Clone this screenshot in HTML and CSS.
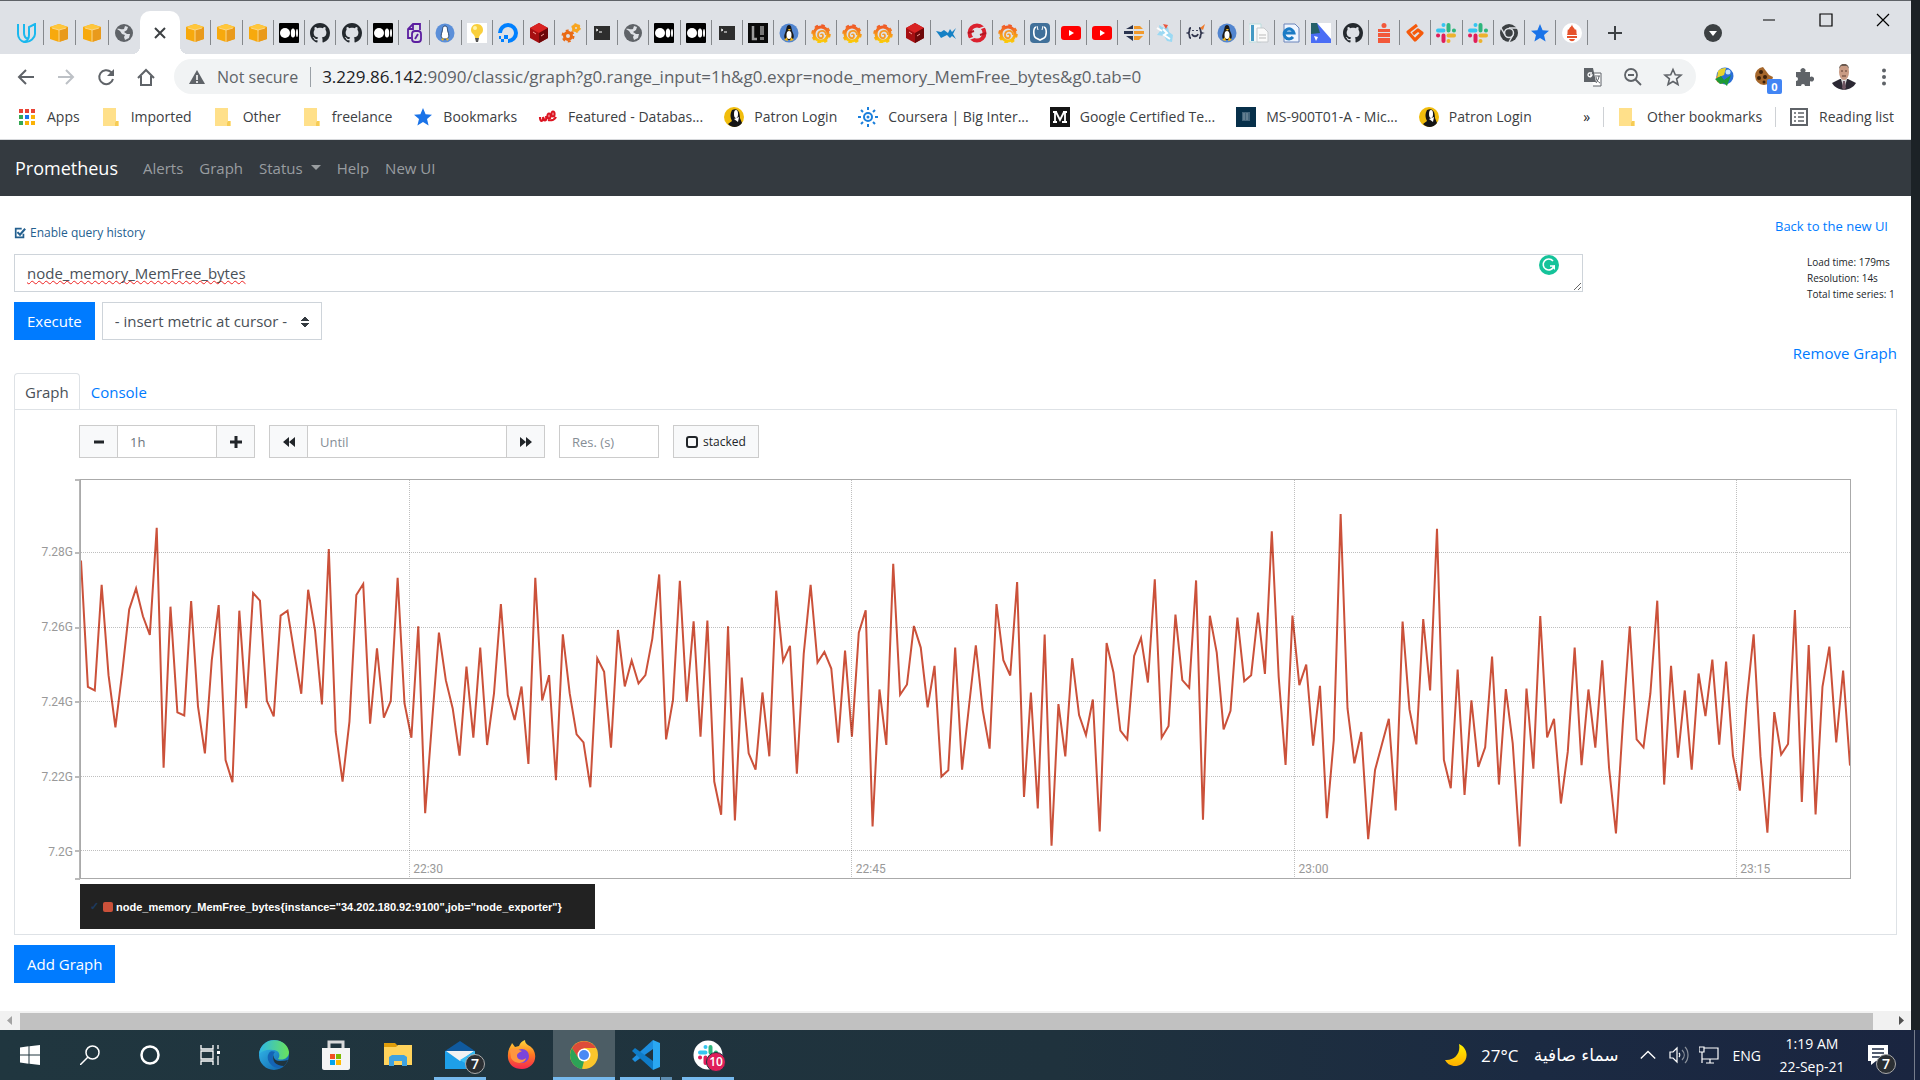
FILE: index.html
```html
<!DOCTYPE html>
<html lang="en">
<head>
    <meta charset="UTF-8">
    <meta name="viewport" content="width=device-width, initial-scale=1.0">
    <title>Prometheus Time Series Collection and Processing Server</title>
    <link rel="stylesheet" href="styles.css">
</head>
<body>
<svg class="symbols" aria-hidden="true">
    <defs>
        <linearGradient id="gold" x2="0" y2="1"><stop offset="0" stop-color="#f05a28"/><stop offset="1" stop-color="#fbca0a"/></linearGradient>
        <linearGradient id="edgeBlue" x2="1" y2="1"><stop offset="0" stop-color="#36c1f1"/><stop offset="1" stop-color="#0c59a4"/></linearGradient>
        <linearGradient id="edgeGreen" x2="1"><stop offset="0" stop-color="#2cb6e8"/><stop offset="1" stop-color="#6ae25a"/></linearGradient>
        <linearGradient id="fox" x2="0" y2="1"><stop offset="0" stop-color="#ffd93b"/><stop offset=".5" stop-color="#ff7a22"/><stop offset="1" stop-color="#f5264f"/></linearGradient>
        <linearGradient id="moonFill" x2="0" y2="1"><stop offset="0" stop-color="#fff200"/><stop offset="1" stop-color="#ffae00"/></linearGradient>
    </defs>
    <symbol id="udacity" viewBox="0 0 20 20"><path d="M1 1v10c0 4 3 7 6 8 3-1 5-3 5-7V4l6-3v10c0 4-5 8-9 8M7 1v9c0 3 1 5 4 6" fill="none" stroke="#1ab8ee" stroke-width="2"/></symbol>
    <symbol id="cube" viewBox="0 0 20 20"><path d="M1 4l9-3 9 3v12l-9 3-9-3z" fill="#f7a90d"/><path d="M10 7l9-3v12l-9 3z" fill="#e99a1c"/><path d="M1 4l9-3 9 3-9 3z" fill="#ffc73c"/><path d="M10 7v12M3 5l7 2 7-2" stroke="#fbd78a" fill="none"/></symbol>
    <symbol id="globe" viewBox="0 0 20 20"><circle cx="10" cy="10" r="9" fill="#5f6368"/><path d="M3 6c2-1 4 1 7 0l1-3 3 1-1 3-3 2 3 2 3 0-1 4-4 2-1-3 1-2-3-1-2-3z" fill="#dee1e6"/></symbol>
    <symbol id="medium" viewBox="0 0 20 20"><rect width="20" height="20" rx="1"/><circle cx="6" cy="10" r="5" fill="#fff"/><ellipse cx="14" cy="10" rx="2.200" ry="4.600" fill="#fff"/><ellipse cx="18" cy="10" rx="1" ry="4" fill="#fff"/></symbol>
    <symbol id="github" viewBox="0 0 16 16"><path fill="#24292e" d="M8 0C3.580 0 0 3.580 0 8c0 3.540 2.290 6.530 5.470 7.590.4.070.55-.17.55-.38 0-.19-.01-.82-.01-1.490-2.010.37-2.530-.49-2.690-.94-.09-.23-.48-.94-.82-1.130-.28-.15-.68-.52-.01-.53.63-.01 1.080.58 1.230.82.72 1.210 1.870.87 2.330.66.07-.52.28-.87.51-1.070-1.780-.2-3.640-.89-3.640-3.950 0-.87.31-1.590.82-2.150-.08-.2-.36-1.020.08-2.120 0 0 .67-.21 2.200.82.64-.18 1.320-.27 2-.27s1.360.09 2 .27c1.530-1.040 2.200-.82 2.200-.82.44 1.100.16 1.920.08 2.120.51.56.82 1.270.82 2.150 0 3.070-1.870 3.750-3.650 3.950.29.25.54.73.54 1.480 0 1.070-.01 1.930-.01 2.200 0 .21.15.46.55.38A8 8 0 0016 8c0-4.420-3.580-8-8-8z"/></symbol>
    <symbol id="docs" viewBox="0 0 20 20"><g fill="none" stroke="#5c1fa0" stroke-width="1.800"><path d="M7 15H4V6l5-5h7v6M4 6h5V1"/><rect x="8" y="8" width="9" height="11" rx="3"/><path d="M11 16l3-5"/></g></symbol>
    <symbol id="penguin" viewBox="0 0 20 20"><circle cx="10" cy="10" r="9.500" fill="#5285cf"/><path d="M10 2c3 0 2 4 4 8 2 5 0 7-4 7s-6-2-4-7c2-4 1-8 4-8z" fill="#191919"/><ellipse cx="10" cy="12" rx="2.500" ry="4" fill="#fff"/><path d="M5 17l3-3 1 4zM15 17l-3-3-1 4zM9 6h3l-2 2z" fill="#f5b81c"/></symbol>
    <symbol id="penguinPale" viewBox="0 0 20 20"><circle cx="10" cy="10" r="9.500" fill="#5b8fd9"/><path d="M10 3c3 0 2 3 3 6 2 5 0 7-3 7s-5-2-3-7c1-3 0-6 3-6z" fill="#fff" stroke="#27456e"/><path d="M6 16l3-1-1 3zM14 16l-3-1 1 3z" fill="#f5b81c"/></symbol>
    <symbol id="bulb" viewBox="0 0 20 20"><path d="M0 0h20v20H0z" fill="#fff"/><path d="M10 1c4 0 6 3 6 6 0 4-4 4-4 8H8c0-4-4-4-4-8 0-3 2-6 6-6z" fill="#f9cf3c"/><path d="M8 15h4l-1 4H9z" fill="#555"/><circle cx="8" cy="5" r="2" fill="#fff3a5"/></symbol>
    <symbol id="ocean" viewBox="0 0 20 20"><path d="M10 20v-4a6 6 0 1 0-6-6H0a10 10 0 1 1 10 10z" fill="#0080ff"/><path d="M6 16h4v-4H6zM3 16h3v3H3zM1 13h2v3H1z" fill="#0080ff"/></symbol>
    <symbol id="redcube" viewBox="0 0 20 20"><path d="M10 0l9 5v10l-9 5-9-5V5z" fill="#a60f12"/><path d="M10 0l9 5-9 5-9-5z" fill="#d92323"/><path d="M10 10l9-5v10l-9 5z" fill="#6d080a"/><path d="M4 9l3 2M12 13l3-2" stroke="#f6a19a"/></symbol>
    <symbol id="gears" viewBox="0 0 20 20"><g fill="none" stroke-width="3"><circle cx="7" cy="13" r="3.500" stroke="#ea6a14"/><circle cx="15" cy="5" r="2.500" stroke="#f8a51f"/><circle cx="7" cy="13" r="5.500" stroke="#ea6a14" stroke-width="2" stroke-dasharray="2.900 2.860"/><circle cx="15" cy="5" r="4" stroke="#f8a51f" stroke-width="1.500" stroke-dasharray="2 2.200"/></g></symbol>
    <symbol id="term" viewBox="0 0 20 20"><path d="M2 3h16v14H2z" fill="#2e2e2e"/><path d="M4 6l2 1-2 1M7 9h3" stroke="#fff" fill="none"/></symbol>
    <symbol id="linuxin" viewBox="0 0 20 20"><path d="M0 0h20v20H0z" fill="#0a0a0a"/><path d="M5 3v13h4" stroke="#9b9b9b" stroke-width="2.500" fill="none"/><path d="M12 3h4v9h-4zM12 14h4v3h-4z" fill="#777"/></symbol>
    <symbol id="grafana" viewBox="0 0 20 20"><circle cx="10" cy="11" r="7" fill="none" stroke="url(#gold)" stroke-width="3"/><circle cx="10" cy="11" r="8.500" fill="none" stroke="url(#gold)" stroke-width="2.500" stroke-dasharray="3.400 3.280"/><path d="M15 12c0-6-8-5-8 0 0 4 5 4 5 1 0-2-2-2-2-1" fill="none" stroke="#f59a27" stroke-width="1.800"/></symbol>
    <symbol id="hound" viewBox="0 0 20 20"><path d="M0 8l5 1 3-2 4 3 2-4 2 3 4-4-3 6 3 5-4-3-2 2-3-3-6 3-2-3z" fill="#1581c5"/></symbol>
    <symbol id="shift" viewBox="0 0 20 20"><circle cx="10" cy="10" r="7.500" fill="none" stroke="#db212f" stroke-width="4"/><path d="M12 6l8-3M0 17l8-3" stroke="#dee1e6" stroke-width="1.500"/><path d="M1 10l6-2M13 12l6-2" stroke="#b31723" stroke-width="2"/></symbol>
    <symbol id="owl" viewBox="0 0 20 20"><rect width="20" height="20" rx="4" fill="#40709a"/><path d="M6 4c-3 1-3 9 0 11l4 2 4-2c3-2 3-10 0-11" fill="none" stroke="#fff" stroke-width="1.600"/><path d="M7 3l1 4M13 3l-1 4" stroke="#fff"/></symbol>
    <symbol id="youtube" viewBox="0 0 20 20"><rect y="3" width="20" height="14" rx="3" fill="#f00"/><path d="M8 7l5 3-5 3z" fill="#fff"/></symbol>
    <symbol id="stripes" viewBox="0 0 20 20"><path d="M9 2L2 6h7zM9 8H0v3h9zM9 13H2l7 5z" fill="#2a3450"/><path d="M10 3h6l3 3h-9zM10 8h10v3H10zM10 13h9l-4 4h-5z" fill="#f19a2c"/></symbol>
    <symbol id="genie" viewBox="0 0 20 20"><path d="M4 2l5 3 4-1 1 5 4 3-1 7-5-1-3-5-7-1 3-4z" fill="#9bd9f3"/><path d="M2 5l5 3M8 6l4 4-3 2 6 4" fill="none" stroke="#fff" stroke-width="2"/><path d="M8 1l5 1-2 4z" fill="#e9573f"/></symbol>
    <symbol id="face" viewBox="0 0 20 20"><path d="M5 5c-3 0 0 4-3 5 3 1 0 5 3 5M13 5c3 0 0 4 3 5-3 1 0 5-3 5M6 11c1 3 5 3 6 0M7 7v1M11 7v1" fill="none" stroke="#333850" stroke-width="1.800"/><path d="M14 5l5-4-2 6z" fill="#f07a2b"/></symbol>
    <symbol id="sheet" viewBox="0 0 20 20"><path d="M0 1h12v18H0z" fill="#f7f8f9" stroke="#bdd"/><path d="M2 2h3v16H2z" fill="#4499c4"/><path d="M8 5h7l4 4v10H8z" fill="#fafafa" stroke="#c5c9cc"/><path d="M10 12h7M10 15h7" stroke="#bbb"/></symbol>
    <symbol id="iedoc" viewBox="0 0 20 20"><path d="M4 1h11l4 4v14H4z" fill="#eef5ff" stroke="#6a84ba"/><path d="M13 14a5 5 0 1 1 1-4H5" fill="none" stroke="#1b7bc5" stroke-width="3"/></symbol>
    <symbol id="azure" viewBox="0 0 20 20"><path d="M0 0h20v20H0z" fill="#fff"/><path d="M0 0h6l14 16v4H0z" fill="#4a6df5"/><path d="M0 0h6l3 10-9 1z" fill="#25616a"/><path d="M3 13l2 5 2-4z" fill="#fff"/></symbol>
    <symbol id="tower" viewBox="0 0 20 20"><g fill="#f2583a"><circle cx="10" cy="2.500" r="2.500"/><path d="M4 6h12v3H4zM4 10h12v4H4zM4 15h12v5H4z"/></g></symbol>
    <symbol id="gitpod" viewBox="0 0 20 20"><path d="M12 2L3 9l7 8 7-7-4-3-5 4" fill="none" stroke="#f55a0c" stroke-width="3.200" stroke-linejoin="round"/></symbol>
    <symbol id="slack" viewBox="0 0 20 20"><g stroke-width="4" stroke-linecap="round"><path d="M7.500 2v.1M2 7.500h5.500" stroke="#36c5f0"/><path d="M12.500 2v5.500M18 7.500h-.1" stroke="#2eb67d"/><path d="M12.500 12.500H18M12.500 18v-.1" stroke="#ecb22e"/><path d="M7.500 12.500V18M2 12.500h.1" stroke="#e01e5a"/></g></symbol>
    <symbol id="chromeDark" viewBox="0 0 20 20"><circle cx="10" cy="10" r="9" fill="#3c4043"/><circle cx="10" cy="10" r="4.500" fill="none" stroke="#dee1e6" stroke-width="1.500"/><path d="M10 5h8M6 12L2 5M14 12l-4 7" stroke="#dee1e6" stroke-width="1.500"/></symbol>
    <symbol id="star" viewBox="0 0 20 20"><path d="M10 1l2.600 6.300 6.400.5-5 4.200 1.600 6.500L10 15l-5.600 3.500L6 12 1 7.800l6.400-.5z" fill="#1a73e8"/></symbol>
    <symbol id="flame" viewBox="0 0 20 20"><circle cx="10" cy="10" r="10" fill="#fff"/><path d="M10 1c0 3 3 4 3 6l1-1c1 3 0 4 1 6H5c1-2 0-3 1-6l1 1c0-3 3-3 3-6zM5 13h10v2H5zM7 16h6c-1 3-5 3-6 0z" fill="#e6522c"/></symbol>
    <symbol id="folder" viewBox="0 0 20 20"><path d="M2 1h13v13h3v5H2z" fill="#ffe08a"/><path d="M15 14h2v5h-3v-3z" fill="#f6cc55"/></symbol>
    <symbol id="apps" viewBox="0 0 20 20"><path d="M2 2h4v4H2zM8 2h4v4H8zM14 2h4v4h-4z" fill="#ea4335"/><path d="M2 8h4v4H2zM2 14h4v4H2z" fill="#34a853"/><path d="M8 8h4v4H8z" fill="#1a73e8"/><path d="M14 8h4v4h-4zM8 14h4v4H8zM14 14h4v4h-4z" fill="#fbb206"/></symbol>
    <symbol id="redmark" viewBox="0 0 20 20"><g fill="none" stroke="#dc1421" stroke-width="2.200"><path d="M2 10c0 6 4 4 3 0 2 6 4 3 3-1"/><ellipse cx="11" cy="9" rx="1.500" ry="2.500"/><ellipse cx="15" cy="7" rx="1.500" ry="2.500"/><path d="M10 13c4 1 7-1 8-3"/></g></symbol>
    <symbol id="patron" viewBox="0 0 20 20"><circle cx="10" cy="10" r="10" fill="#f1bd0c"/><path d="M8 3c7-3 8 4 8 8l2 5c-4 6-12 4-14 1l4-3c-2-4-2-7 0-11z" fill="#151515"/><ellipse cx="12" cy="7" rx="2" ry="4" fill="#fff"/><path d="M10 12l5-2-1 5z" fill="#fff"/></symbol>
    <symbol id="coursera" viewBox="0 0 20 20"><g fill="none" stroke="#1a7fdc" stroke-width="2"><circle cx="10" cy="10" r="4"/><path d="M10 0v3M10 17v3M0 10h3M17 10h3M3 3l2 2M15 15l2 2M17 3l-2 2M3 17l2-2"/></g><circle cx="10" cy="10" r="1.500" fill="#1a7fdc"/></symbol>
    <symbol id="mblack" viewBox="0 0 20 20"><path d="M0 0h20v20H0z" fill="#151515"/><path d="M3 5h4M13 5h4M3 15h4M12 15h5M5 5v10M6 5l4 8 4-8M15 5v10" fill="none" stroke="#fff" stroke-width="1.800"/></symbol>
    <symbol id="msnavy" viewBox="0 0 20 20"><path d="M0 0h20v20H0z" fill="#07304a"/><path d="M6 5h8v9H6z" fill="#44657b"/><path d="M8 6v7M11 6v7" stroke="#8199a7"/></symbol>
    <symbol id="list" viewBox="0 0 20 20"><path d="M2 2h16v16H2z" fill="none" stroke="#5f6368" stroke-width="2"/><path d="M5 6h2M9 6h6M5 10h2M9 10h6M5 14h2M9 14h6" stroke="#5f6368" stroke-width="1.600"/></symbol>
</svg>

<div class="browser">
    <div class="tabstrip">
        <div class="tabs tabs-left">
            <button class="tab" aria-label="Udacity"><svg><use href="#udacity"/></svg></button>
            <button class="tab" aria-label="AWS"><svg><use href="#cube"/></svg></button>
            <button class="tab" aria-label="AWS"><svg><use href="#cube"/></svg></button>
            <button class="tab" aria-label="Page"><svg><use href="#globe"/></svg></button>
        </div>
        <button class="tab-active" aria-label="Close tab"><svg viewBox="0 0 12 12"><path d="M1 1l10 10M11 1L1 11" stroke="#3c4043" stroke-width="2"/></svg></button>
        <div class="tabs tabs-right">
            <button class="tab" aria-label="AWS"><svg><use href="#cube"/></svg></button>
            <button class="tab" aria-label="AWS"><svg><use href="#cube"/></svg></button>
            <button class="tab" aria-label="AWS"><svg><use href="#cube"/></svg></button>
            <button class="tab" aria-label="Medium"><svg><use href="#medium"/></svg></button>
            <button class="tab" aria-label="GitHub"><svg><use href="#github"/></svg></button>
            <button class="tab" aria-label="GitHub"><svg><use href="#github"/></svg></button>
            <button class="tab" aria-label="Medium"><svg><use href="#medium"/></svg></button>
            <button class="tab" aria-label="Docs"><svg><use href="#docs"/></svg></button>
            <button class="tab" aria-label="Linux"><svg><use href="#penguinPale"/></svg></button>
            <button class="tab" aria-label="Tips"><svg><use href="#bulb"/></svg></button>
            <button class="tab" aria-label="DigitalOcean"><svg><use href="#ocean"/></svg></button>
            <button class="tab" aria-label="Redis"><svg><use href="#redcube"/></svg></button>
            <button class="tab" aria-label="Settings"><svg><use href="#gears"/></svg></button>
            <button class="tab" aria-label="Terminal"><svg><use href="#term"/></svg></button>
            <button class="tab" aria-label="Page"><svg><use href="#globe"/></svg></button>
            <button class="tab" aria-label="Medium"><svg><use href="#medium"/></svg></button>
            <button class="tab" aria-label="Medium"><svg><use href="#medium"/></svg></button>
            <button class="tab" aria-label="Terminal"><svg><use href="#term"/></svg></button>
            <button class="tab" aria-label="Linux blog"><svg><use href="#linuxin"/></svg></button>
            <button class="tab" aria-label="Linux"><svg><use href="#penguin"/></svg></button>
            <button class="tab" aria-label="Grafana"><svg><use href="#grafana"/></svg></button>
            <button class="tab" aria-label="Grafana"><svg><use href="#grafana"/></svg></button>
            <button class="tab" aria-label="Grafana"><svg><use href="#grafana"/></svg></button>
            <button class="tab" aria-label="Redis"><svg><use href="#redcube"/></svg></button>
            <button class="tab" aria-label="Page"><svg><use href="#hound"/></svg></button>
            <button class="tab" aria-label="OpenShift"><svg><use href="#shift"/></svg></button>
            <button class="tab" aria-label="Grafana"><svg><use href="#grafana"/></svg></button>
            <button class="tab" aria-label="Page"><svg><use href="#owl"/></svg></button>
            <button class="tab" aria-label="YouTube"><svg><use href="#youtube"/></svg></button>
            <button class="tab" aria-label="YouTube"><svg><use href="#youtube"/></svg></button>
            <button class="tab" aria-label="Page"><svg><use href="#stripes"/></svg></button>
            <button class="tab" aria-label="Page"><svg><use href="#genie"/></svg></button>
            <button class="tab" aria-label="Page"><svg><use href="#face"/></svg></button>
            <button class="tab" aria-label="Linux"><svg><use href="#penguin"/></svg></button>
            <button class="tab" aria-label="Page"><svg><use href="#sheet"/></svg></button>
            <button class="tab" aria-label="Page"><svg><use href="#iedoc"/></svg></button>
            <button class="tab" aria-label="Page"><svg><use href="#azure"/></svg></button>
            <button class="tab" aria-label="GitHub"><svg><use href="#github"/></svg></button>
            <button class="tab" aria-label="Page"><svg><use href="#tower"/></svg></button>
            <button class="tab" aria-label="Page"><svg><use href="#gitpod"/></svg></button>
            <button class="tab" aria-label="Slack"><svg><use href="#slack"/></svg></button>
            <button class="tab" aria-label="Slack"><svg><use href="#slack"/></svg></button>
            <button class="tab" aria-label="Chrome"><svg><use href="#chromeDark"/></svg></button>
            <button class="tab" aria-label="Bookmarks"><svg><use href="#star"/></svg></button>
            <button class="tab" aria-label="Prometheus"><svg><use href="#flame"/></svg></button>
        </div>
        <div class="window-tools">
            <button aria-label="New tab"><svg viewBox="0 0 20 20"><path d="M10 3v14M3 10h14" stroke="#3c4043" stroke-width="2"/></svg></button>
            <button class="tab-search" aria-label="Search tabs"><svg viewBox="0 0 20 20"><circle cx="10" cy="10" r="9" fill="#3c4043"/><path d="M6 8h8l-4 5z" fill="#fff"/></svg></button>
            <button class="win" aria-label="Minimize"><svg viewBox="0 0 20 20"><path d="M4 10h12" stroke="#000"/></svg></button>
            <button class="win" aria-label="Maximize"><svg viewBox="0 0 20 20"><path d="M4 4h12v12H4z" fill="none" stroke="#000" stroke-width="1.200"/></svg></button>
            <button class="win" aria-label="Close"><svg viewBox="0 0 20 20"><path d="M4 4l12 12M16 4L4 16" stroke="#000" stroke-width="1.200"/></svg></button>
        </div>
    </div>

    <div class="toolbar">
        <button aria-label="Back"><svg viewBox="0 0 20 20"><path d="M18 10H3M10 3l-7 7 7 7" fill="none" stroke="#5f6368" stroke-width="2"/></svg></button>
        <button aria-label="Forward"><svg viewBox="0 0 20 20"><path d="M2 10h15M10 3l7 7-7 7" fill="none" stroke="#bdc1c6" stroke-width="2"/></svg></button>
        <button aria-label="Reload"><svg viewBox="0 0 20 20"><path d="M17 12a7 7 0 1 1-2-7l2 2" fill="none" stroke="#5f6368" stroke-width="2"/><path d="M18 2v7h-7z" fill="#5f6368"/></svg></button>
        <button aria-label="Home"><svg viewBox="0 0 20 20"><path d="M2 11l8-8 8 8M5 9v9h10V9" fill="none" stroke="#5f6368" stroke-width="2"/></svg></button>
        <div class="omnibox">
            <svg viewBox="0 0 20 20"><path d="M10 3l8 14H2z" fill="#5f6368"/><path d="M10 8v5M10 14v2" stroke="#fff" stroke-width="1.600"/></svg>
            <span class="insecure">Not secure</span>
            <span class="url"><b>3.229.86.142</b>:9090/classic/graph?g0.range_input=1h&amp;g0.expr=node_memory_MemFree_bytes&amp;g0.tab=0</span>
            <button aria-label="Translate"><svg viewBox="0 0 20 20"><path d="M8 6h10v13h-8" fill="#fff" stroke="#5f6368"/><path d="M1 1h9l3 14H1z" fill="#5f6368"/><path d="M9 6H6a2 2 0 1 0 3 2H7" fill="none" stroke="#fff" stroke-width="1.300"/><path d="M12 9h5M13 10c0 3 2 5 4 6M16 9c0 3-2 5-3 7" fill="none" stroke="#5f6368"/></svg></button>
            <button aria-label="Zoom"><svg viewBox="0 0 20 20"><circle cx="8" cy="8" r="6" fill="none" stroke="#5f6368" stroke-width="1.800"/><path d="M5 8h6M12 12l6 6" stroke="#5f6368" stroke-width="1.800"/></svg></button>
            <button aria-label="Bookmark this tab"><svg viewBox="0 0 20 20"><path d="M10 2.500l2.300 5.300 5.700.4-4.400 3.700 1.400 5.600-5-3-5 3 1.400-5.600L2 8.200l5.700-.4z" fill="none" stroke="#5f6368" stroke-width="1.600"/></svg></button>
        </div>
        <button aria-label="Download manager"><svg viewBox="0 0 20 20"><circle cx="11" cy="9" r="8.500" fill="#2a6fd6"/><path d="M4 4a9 9 0 0 1 8-3l-2 7-7 3z" fill="#e8d22f"/><path d="M2 9l4 3 3 5-6-2z" fill="#f07a2b"/><path d="M1 12l6-3 3 4 7-5-4 11-3-3-4 1z" fill="#1d9a36"/><circle cx="14" cy="5" r="2.500" fill="#c5e4ff"/></svg></button>
        <button class="cookie" aria-label="Cookies"><svg viewBox="0 0 20 20"><path d="M9 0a9 9 0 1 0 10 10l-4-2-3-4z" fill="#a5672c"/><g fill="#3c210b"><circle cx="7" cy="5" r="2"/><circle cx="5" cy="11" r="2"/><circle cx="11" cy="10" r="2"/><circle cx="10" cy="15" r="1.500"/></g></svg><span class="badge">0</span></button>
        <button aria-label="Extensions"><svg viewBox="0 0 20 20"><path d="M2 5h5a2.500 2.500 0 1 1 4 0h5v5a2.500 2.500 0 1 1 0 4v5h-5a2 2 0 1 0-4 0H2v-5a2 2 0 1 0 0-4z" fill="#5f6368"/></svg></button>
        <button class="avatar" aria-label="Profile"><svg viewBox="0 0 26 26"><path d="M1 19l8-4h8l8 4c-5 9-19 9-24 0z" fill="#2b2833"/><path d="M10 15l3 11 3-11z" fill="#ddd"/><path d="M12 17h2l1 7-2 2-2-2z" fill="#6f5663"/><ellipse cx="13" cy="8" rx="5" ry="8" fill="#c99b84"/><path d="M8 5c0-7 10-7 10 0l-2-3h-6z" fill="#6b5a50"/><path d="M10 7h2M14 7h2M11 12h4" stroke="#5b3b30"/></svg></button>
        <button aria-label="Menu"><svg viewBox="0 0 20 20"><g fill="#5f6368"><circle cx="10" cy="3.500" r="2"/><circle cx="10" cy="10" r="2"/><circle cx="10" cy="16.500" r="2"/></g></svg></button>
    </div>

    <nav class="bookmarks">
        <a href="#"><svg><use href="#apps"/></svg>Apps</a>
        <a href="#"><svg><use href="#folder"/></svg>Imported</a>
        <a href="#"><svg><use href="#folder"/></svg>Other</a>
        <a href="#"><svg><use href="#folder"/></svg>freelance</a>
        <a href="#"><svg><use href="#star"/></svg>Bookmarks</a>
        <a href="#"><svg><use href="#redmark"/></svg>Featured - Databas...</a>
        <a href="#"><svg><use href="#patron"/></svg>Patron Login</a>
        <a href="#"><svg><use href="#coursera"/></svg>Coursera | Big Inter...</a>
        <a href="#"><svg><use href="#mblack"/></svg>Google Certified Te...</a>
        <a href="#"><svg><use href="#msnavy"/></svg>MS-900T01-A - Mic...</a>
        <a href="#"><svg><use href="#patron"/></svg>Patron Login</a>
        <div class="bookmarks-end">
            <button aria-label="More bookmarks">»</button>
            <a href="#"><svg><use href="#folder"/></svg>Other bookmarks</a>
            <a href="#"><svg><use href="#list"/></svg>Reading list</a>
        </div>
    </nav>

    <nav class="navbar">
        <a class="brand" href="#">Prometheus</a>
        <a href="#">Alerts</a>
        <a href="#">Graph</a>
        <a class="dropdown" href="#">Status</a>
        <a href="#">Help</a>
        <a href="#">New UI</a>
    </nav>

    <main class="page">
        <div class="top-row">
            <button class="history"><svg viewBox="0 0 14 14"><path d="M11 8v4H2V2h7" fill="none" stroke="currentColor" stroke-width="2"/><path d="M4 6l3 3 6-7" fill="none" stroke="currentColor" stroke-width="2.400"/></svg>Enable query history</button>
            <a href="#">Back to the new UI</a>
        </div>
        <div class="query-row">
            <div class="expression">
                <textarea rows="1" aria-label="Expression" spellcheck="false">node_memory_MemFree_bytes</textarea>
                <svg class="grammarly" viewBox="0 0 20 20"><circle cx="10" cy="10" r="10" fill="#15c39a"/><path d="M14 6a5.500 5.500 0 1 0 1 5h-4" fill="none" stroke="#fff" stroke-width="1.600"/><path d="M16 10v5l-3-3z" fill="#fff"/></svg>
            </div>
            <div class="stats">Load time: 179ms<br>Resolution: 14s<br>Total time series: 1</div>
        </div>
        <div class="execute-row">
            <button class="primary">Execute</button>
            <select aria-label="Metric"><option>- insert metric at cursor -</option></select>
        </div>
        <div class="remove-row"><a href="#">Remove Graph</a></div>
        <div class="pane-tabs">
            <a class="selected" href="#">Graph</a>
            <a href="#">Console</a>
        </div>
        <section class="pane">
            <div class="controls">
                <div class="group">
                    <button aria-label="Shrink range"><svg viewBox="0 0 14 14"><path d="M2 7h10" stroke="currentColor" stroke-width="3"/></svg></button>
                    <input class="short" type="text" value="1h" aria-label="Range">
                    <button aria-label="Grow range"><svg viewBox="0 0 14 14"><path d="M1 7h12M7 1v12" stroke="currentColor" stroke-width="3"/></svg></button>
                </div>
                <div class="group">
                    <button aria-label="Rewind"><svg viewBox="0 0 14 14"><path d="M7 2v10L1 7zM13 2v10L7 7z" fill="currentColor"/></svg></button>
                    <input class="long" type="text" placeholder="Until" aria-label="Until">
                    <button aria-label="Forward in time"><svg viewBox="0 0 14 14"><path d="M1 2v10l6-5zM7 2v10l6-5z" fill="currentColor"/></svg></button>
                </div>
                <div class="group"><input class="short" type="text" placeholder="Res. (s)" aria-label="Resolution"></div>
                <label class="stacked"><input type="checkbox">stacked</label>
            </div>

            <div class="chart">
                <svg class="y-axis">
                    <text x="58" y="18.300%" dy="4">7.28G</text>
                    <text x="58" y="37%" dy="4">7.26G</text>
                    <text x="58" y="55.700%" dy="4">7.24G</text>
                    <text x="58" y="74.400%" dy="4">7.22G</text>
                    <text x="58" y="93%" dy="4">7.2G</text>
                    <path d="M60 1h4M60 74h4M60 149h4M60 223h4M60 298h4M60 372h4M60 400h4"/>
                </svg>
                <svg class="plot">
                    <svg class="line" viewBox="0 28 257 1197" preserveAspectRatio="none">
                        <polyline id="series"/>
                    </svg>
                    <g class="grid">
                        <line x2="100%" y1="18.300%" y2="18.300%"/>
                        <line x2="100%" y1="37%" y2="37%"/>
                        <line x2="100%" y1="55.700%" y2="55.700%"/>
                        <line x2="100%" y1="74.400%" y2="74.400%"/>
                        <line x2="100%" y1="93%" y2="93%"/>
                        <line x1="18.550%" x2="18.550%" y2="100%"/>
                        <line x1="43.570%" x2="43.570%" y2="100%"/>
                        <line x1="68.600%" x2="68.600%" y2="100%"/>
                        <line x1="93.570%" x2="93.570%" y2="100%"/>
                    </g>
                    <text x="18.550%" y="393" dx="4">22:30</text>
                    <text x="43.570%" y="393" dx="4">22:45</text>
                    <text x="68.600%" y="393" dx="4">23:00</text>
                    <text x="93.570%" y="393" dx="4">23:15</text>
                </svg>
            </div>
            <div class="legend"><span class="tick">✓</span><span class="swatch"></span>node_memory_MemFree_bytes{instance="34.202.180.92:9100",job="node_exporter"}</div>
        </section>
        <button class="primary">Add Graph</button>
    </main>

    <div class="scrollbar">
        <svg viewBox="0 0 20 19"><path d="M12 5v9L7 9.500z" fill="#a3a3a3"/></svg>
        <div class="thumb"></div>
        <svg class="end" viewBox="0 0 20 19"><path d="M8 5v9l5-4.500z" fill="#505050"/></svg>
    </div>
</div>

<footer class="taskbar">
    <button class="sys" aria-label="Start"><svg viewBox="0 0 20 20"><path d="M0 2.500L8.500 1.300v8.200H0zM9.500 1.200L20 0v9.500H9.500zM0 10.500h8.500v8.200L0 17.500zM9.500 10.500H20V20L9.500 18.800z" fill="#fff"/></svg></button>
    <button class="sys" aria-label="Search"><svg viewBox="0 0 20 20"><circle cx="12.500" cy="7.500" r="6.500" fill="none" stroke="#fff" stroke-width="1.500"/><path d="M8 12l-8 8" stroke="#fff" stroke-width="1.500"/></svg></button>
    <button class="sys" aria-label="Cortana"><svg viewBox="0 0 20 20"><circle cx="10" cy="10" r="8.500" fill="none" stroke="#fff" stroke-width="2.500"/></svg></button>
    <button class="sys" aria-label="Task view"><svg viewBox="0 0 20 20"><path d="M1 0v4h12V0M1 6h12v8H1zM1 20v-4h12v4M18 0v4M18 11v9" fill="none" stroke="#fff" stroke-width="1.300"/><path d="M17 6h3v3h-3z" fill="#fff"/></svg></button>
    <button class="app" aria-label="Edge"><svg viewBox="0 0 30 30"><circle cx="15" cy="15" r="15" fill="url(#edgeBlue)"/><path d="M0 14C2-4 28-4 30 12c0 6-6 9-11 7 3-4 1-9-5-9C8 9 3 11 0 14z" fill="url(#edgeGreen)"/><path d="M10 13c-4 6 2 15 10 15l7-4c-7 2-13 0-13-8 0-1 1-3 2-4-2-1-5-1-6 1z" fill="#1464b5"/><path d="M15 14c-2 8 7 8 14 6-1 2-2 4-4 6-8 0-13-5-10-12z" fill="#20343e"/></svg></button>
    <button class="app" aria-label="Store"><svg viewBox="0 0 30 30"><path d="M8 9V2h14v7" fill="none" stroke="#d9dadb" stroke-width="3"/><path d="M1 8h28v20c0 1-1 2-2 2H3c-1 0-2-1-2-2z" fill="#f4f4f4"/><path d="M9 14h5v5H9z" fill="#f25022"/><path d="M15 14h5v5h-5z" fill="#7fba00"/><path d="M9 20h5v5H9z" fill="#00a4ef"/><path d="M15 20h5v5h-5z" fill="#ffb900"/></svg></button>
    <button class="app" aria-label="File Explorer"><svg viewBox="0 0 30 30"><path d="M1 3h11l3 3-2 3H1z" fill="#e09d0a"/><path d="M1 7h12l2-2h14v20H1z" fill="#ffd35c"/><path d="M6 26v-9l3-2h12l3 2v9h-5v-5h-8v5z" fill="#3fa2e0"/></svg></button>
    <button class="app running" aria-label="Mail"><svg viewBox="0 0 30 30"><path d="M0 11L15 1l15 10z" fill="#105a9e"/><path d="M0 11h30v18H0z" fill="#1e9fe8"/><path d="M1 11h28L15 21z" fill="#f2f2f2"/><path d="M30 11v18L15 20z" fill="#39bef5"/></svg><span class="count">7</span></button>
    <button class="app" aria-label="Firefox"><svg viewBox="0 0 30 30"><path d="M15 29C5 29 0 22 1 14c0-5 3-8 4-11l3 4 4-1c1-3 3-5 6-6 0 5 5 5 8 9 6 10-1 20-11 20z" fill="url(#fox)"/><circle cx="15" cy="16" r="7" fill="#7b45dc"/><path d="M3 10c5-3 9 0 12 1-4 2-5 3-5 5 0 4 6 5 9 2-1 6-11 7-15 0z" fill="#ff9640"/></svg></button>
    <button class="app running current" aria-label="Chrome"><svg viewBox="0 0 30 30"><circle cx="15" cy="15" r="14" fill="#fbc52c"/><path d="M3 8a14 14 0 0 1 24 0H15l-6 10z" fill="#dd4b39"/><path d="M3 8l7 11 5 2-2 8A14 14 0 0 1 3 8z" fill="#2da357"/><circle cx="15" cy="15" r="6.500" fill="#fff"/><circle cx="15" cy="15" r="5" fill="#4a8af4"/></svg></button>
    <button class="app running split" aria-label="VS Code"><svg viewBox="0 0 30 30"><path d="M22 0v9L4 22l-3-3z" fill="#1d8fe0"/><path d="M1 11l3-3 18 13v9z" fill="#0f7cc8"/><path d="M22 0l7 3v24l-7 3z" fill="#2aa8f2"/></svg></button>
    <button class="app running" aria-label="Slack"><svg viewBox="0 0 30 30"><circle cx="15" cy="15" r="14.500" fill="#fff"/><use href="#slack" x="5" y="5" width="20" height="20"/></svg><span class="count red">10</span></button>

    <div class="tray">
        <svg class="moon" viewBox="0 0 22 22"><path d="M14 0c9 4 10 15 3 20-6 4-14 2-17-4 9 1 16-6 14-16z" fill="url(#moonFill)"/></svg>
        <span class="temp">27°C</span>
        <span class="sky" lang="ar" dir="rtl">سماء صافية</span>
        <svg class="chevron" viewBox="0 0 20 20"><path d="M2 14l8-8 8 8" fill="none" stroke="#fff" stroke-width="1.500"/></svg>
        <svg viewBox="0 0 20 20"><path d="M1 7h3l4-4v14l-4-4H1zM10 8c1 1 1 3 0 4" fill="none" stroke="#fff" stroke-width="1.200"/><path d="M13 5c3 3 3 7 0 10M16 2c4 4 4 12 0 16" fill="none" stroke="#8b929c" stroke-width="1.200"/></svg>
        <svg viewBox="0 0 20 20"><path d="M5 3h14v11H3V7M7 18h8M11 14v4M3 14v4M0 2h5v5H0z" fill="none" stroke="#fff" stroke-width="1.200"/></svg>
        <span class="lang">ENG</span>
        <div class="clock">1:19 AM<br>22-Sep-21</div>
        <button class="notify" aria-label="Notifications"><svg viewBox="0 0 20 20"><path d="M0 0h20v16H8l-5 4v-4H0z" fill="#fff"/><path d="M4 4h12M4 8h12M4 12h8" stroke="#1b2842" stroke-width="1.500"/></svg><span class="count">7</span></button>
    </div>
</footer>
<script src="graph.js"></script>
</body>
</html>
```
FILE: styles.css
```css
* {
    box-sizing: border-box;
}
body {
    margin: 0;
    min-height: 100vh;
    display: flex;
    flex-direction: column;
    background: #1c2226;
    font-family: "Open Sans", "Noto Sans", sans-serif;
    font-size: 15px;
    color: #212529;
}
button {
    flex: none;
    padding: 0;
    border: none;
    background: none;
    font: inherit;
    color: inherit;
}
a {
    color: #007bff;
    text-decoration: none;
}
svg {
    display: block;
    flex: none;
    width: 20px;
    height: 20px;
}
.symbols {
    position: absolute;
    width: 0;
    height: 0;
}
.browser {
    flex: 1;
    display: flex;
    flex-direction: column;
    margin-right: 9px;
    background: #fff;
    border-top: 1px solid #5f6368;
}

/* tab strip */
.tabstrip {
    display: flex;
    align-items: flex-end;
    height: 53px;
    padding-left: 11px;
    background: #dee1e6;
}
.tabs {
    display: flex;
    height: 43px;
    align-items: center;
}
.tabs-left {
    width: 129px;
}
.tabs-right {
    flex: 1;
}
.tab {
    flex: 1;
    display: flex;
    justify-content: center;
    align-items: center;
    height: 25px;
    border-right: 1px solid #85888c;
}
.tabs-left .tab:last-child {
    border-right: none;
}
.tab-active {
    position: relative;
    display: flex;
    justify-content: center;
    align-items: center;
    width: 40px;
    height: 43px;
    background: #fff;
    border-radius: 10px 10px 0 0;
}
.tab-active svg {
    width: 12px;
    height: 12px;
}
.tab-active::before,
.tab-active::after {
    content: "";
    position: absolute;
    bottom: 0;
    width: 8px;
    height: 8px;
}
.tab-active::before {
    left: -8px;
    background: radial-gradient(circle at 0 0, transparent 8px, #fff 8px);
}
.tab-active::after {
    right: -8px;
    background: radial-gradient(circle at 100% 0, transparent 8px, #fff 8px);
}
.window-tools {
    display: flex;
    flex: none;
    width: 323px;
    height: 43px;
    padding-left: 17px;
    align-items: center;
}
.window-tools .tab-search {
    margin: 0 17px 0 78px;
}
.window-tools .win {
    display: flex;
    justify-content: center;
    width: 57px;
    padding-bottom: 26px;
}

/* toolbar */
.toolbar {
    display: flex;
    align-items: center;
    gap: 20px;
    padding: 5px 17px 0 16px;
}
.omnibox {
    flex: 1;
    display: flex;
    align-items: center;
    gap: 20px;
    height: 35px;
    margin: 0 -2px;
    padding: 0 13px;
    border-radius: 18px;
    background: #f1f3f4;
    font-size: 16px;
    color: #5f6368;
}
.insecure {
    margin-left: -10px;
    padding-right: 12px;
    border-right: 1px solid #9aa0a6;
    line-height: 20px;
}
.url {
    flex: 1;
    margin-left: -9px;
    font-size: 17px;
}
.url b {
    font-weight: 400;
    color: #202124;
}
.cookie {
    position: relative;
}
.badge {
    position: absolute;
    left: 13px;
    top: 12px;
    width: 15px;
    height: 15px;
    border-radius: 2px;
    background: #4285f4;
    color: #fff;
    font-size: 11px;
    font-weight: 700;
    line-height: 15px;
}
.avatar svg {
    width: 26px;
    height: 26px;
    margin: 0 -3px;
}

/* bookmarks bar */
.bookmarks {
    display: flex;
    align-items: center;
    gap: 21px;
    height: 46px;
    padding: 0 17px;
    border-bottom: 1px solid #d6d8db;
    font-size: 14px;
    white-space: nowrap;
}
.bookmarks a {
    display: flex;
    align-items: center;
    gap: 10px;
    color: #3c4043;
}
.bookmarks-end {
    display: flex;
    align-items: center;
    gap: 13px;
    margin-left: auto;
}
.bookmarks-end a {
    padding-left: 13px;
    border-left: 1px solid #ced1d5;
}

/* prometheus navbar */
.navbar {
    display: flex;
    align-items: center;
    gap: 16px;
    height: 56px;
    padding: 0 15px;
    background: #343a40;
}
.navbar a {
    color: #999da0;
}
.navbar .brand {
    margin-right: 9px;
    font-size: 18px;
    color: #fff;
}
.dropdown::after {
    content: "";
    display: inline-block;
    margin-left: 8px;
    vertical-align: 4px;
    border: 5px solid transparent;
    border-top-color: currentColor;
    border-bottom: none;
}

/* page */
.page {
    flex: 1;
    padding: 17px 14px 25px;
}
.top-row {
    display: flex;
    justify-content: space-between;
    height: 41px;
    padding-right: 9px;
    font-size: 13px;
    line-height: 26px;
}
.history {
    display: flex;
    align-items: center;
    gap: 4px;
    height: 20px;
    margin-top: 10px;
    font-size: 12px;
    color: #24608f;
}
.history svg {
    width: 12px;
    height: 12px;
}
.query-row {
    display: flex;
    justify-content: space-between;
    margin-bottom: 10px;
}
.expression {
    position: relative;
    width: 83.300%;
}
.expression textarea {
    display: block;
    width: 100%;
    height: 38px;
    padding: 7px 12px;
    border: 1px solid #ced4da;
    font: inherit;
    line-height: 22px;
    color: #495057;
    overflow: hidden;
    text-decoration: underline wavy #e22 1px;
    text-decoration-skip-ink: none;
}
.grammarly {
    position: absolute;
    top: 1px;
    right: 24px;
}
.stats {
    width: 90px;
    height: 38px;
    font-size: 10px;
    line-height: 16px;
    white-space: nowrap;
}
.execute-row {
    display: flex;
    gap: 7px;
    margin-bottom: 0;
}
.primary {
    height: 38px;
    padding: 0 13px;
    background: #007bff;
    color: #fff;
}
select {
    width: 220px;
    height: 38px;
    padding: 0 12px;
    border: 1px solid #ced4da;
    border-radius: 0;
    appearance: none;
    background:
        conic-gradient(from 141deg at 50% 100%, transparent 0) 0 0 / 0 0 no-repeat,
        conic-gradient(from 141deg at 50% 0, #343a40 78deg, transparent 0) right 12px top 13px / 8px 5px no-repeat,
        conic-gradient(from -39deg at 50% 100%, #343a40 78deg, transparent 0) right 12px top 20px / 8px 5px no-repeat,
        #fff;
    font: inherit;
    color: #495057;
}
.remove-row {
    display: flex;
    justify-content: flex-end;
    line-height: 26px;
}
.pane-tabs {
    display: flex;
    margin-top: 7px;
}
.pane-tabs a {
    height: 36px;
    padding: 0 10px;
    border: 1px solid transparent;
    line-height: 36px;
}
.pane-tabs .selected {
    margin-bottom: -1px;
    border-color: #dee2e6;
    border-bottom: none;
    border-radius: 4px 4px 0 0;
    background: #fff;
    color: #495057;
}
.pane {
    padding: 15px 45px 5px 0;
    border: 1px solid #dee2e6;
    margin-bottom: 10px;
}
.controls {
    display: flex;
    gap: 14px;
    padding-left: 64px;
    font-size: 13px;
}
.group,
.stacked {
    display: flex;
    height: 33px;
    border: 1px solid #ccc;
}
.group button {
    display: flex;
    align-items: center;
    justify-content: center;
    width: 37px;
    background: #f8f9fa;
}
.group svg {
    width: 14px;
    height: 14px;
}
.group input {
    padding: 0 12px;
    border: none;
    font: inherit;
    color: #6c757d;
}
.group button + input {
    border: solid #ccc;
    border-width: 0 1px;
}
.group input::placeholder {
    color: #868e96;
}
.short {
    width: 100px;
}
.group .short:only-child {
    width: 98px;
}
.long {
    width: 200px;
}
.stacked {
    align-items: center;
    gap: 5px;
    padding: 0 12px;
    background: #f8f9fa;
    font-size: 12px;
}
.stacked input {
    width: 12px;
    height: 12px;
    margin: 0;
    appearance: none;
    border: 2px solid #212529;
    border-radius: 3px;
}

/* chart */
.chart {
    display: flex;
    margin-top: 21px;
    height: 401px;
}
.y-axis {
    width: 65px;
    height: 401px;
    border-right: 1px solid #b5b5b5;
}
.plot {
    flex: 1;
    height: 400px;
    border: 1px solid #aaa;
}
.line {
    width: 100%;
    height: 100%;
}
.chart text {
    font-family: Roboto, "Open Sans", sans-serif;
    font-size: 12px;
    fill: #999;
}
.y-axis text {
    text-anchor: end;
}
.y-axis path {
    stroke: #bbb;
    stroke-width: 2;
}
.grid line {
    stroke: rgba(0, 0, 0, 0.25);
    stroke-dasharray: 1 1;
    shape-rendering: crispEdges;
}
#series {
    fill: none;
    stroke: #cb513a;
    stroke-width: 2px;
    vector-effect: non-scaling-stroke;
}
.legend {
    display: flex;
    align-items: center;
    width: 515px;
    height: 45px;
    margin: 4px 0 0 65px;
    padding-left: 10px;
    background: #222;
    color: #fff;
    font: bold 11px "Liberation Sans", Arial, sans-serif;
    white-space: nowrap;
}
.tick {
    width: 13px;
    color: #1c3a5e;
}
.swatch {
    flex: none;
    width: 10px;
    height: 10px;
    margin-right: 3px;
    border-radius: 2px;
    background: #cb513a;
}

/* horizontal scrollbar */
.scrollbar {
    display: flex;
    background: #f1f1f1;
}
.scrollbar svg {
    height: 19px;
}
.scrollbar .end {
    margin-left: 18px;
}
.thumb {
    flex: 1;
    margin-top: 2px;
    background: #c1c1c1;
}

/* taskbar */
.taskbar {
    display: flex;
    height: 50px;
    background: linear-gradient(90deg, #20363f, #1f323d 55%, #1b2a42 80%, #1a2540);
    color: #fff;
}
.taskbar button {
    position: relative;
    display: flex;
    align-items: center;
    justify-content: center;
}
.sys {
    width: 60px;
}
.sys:nth-child(4) {
    margin-right: 3px;
}
.app {
    width: 62px;
}
.app svg {
    width: 30px;
    height: 30px;
}
.running::after {
    content: "";
    position: absolute;
    bottom: 0;
    left: 5px;
    right: 5px;
    height: 3px;
    background: #76b9ed;
}
.current {
    background: #4c5d65;
}
.current::after {
    left: 0;
    right: 0;
}
.split::after {
    background: linear-gradient(90deg, #76b9ed 40px, #24363f 40px 41px, #5d8cb0 41px);
}
.count {
    position: absolute;
    left: 36px;
    top: 24px;
    width: 20px;
    height: 20px;
    border: 1px solid #aaa;
    border-radius: 50%;
    background: #2b2f33;
    font-size: 14px;
    font-weight: 600;
    line-height: 18px;
    text-align: center;
}
.red {
    border-color: #20343e;
    background: #e01e5a;
    font-size: 12px;
    top: 22px;
    left: 29px;
}
.tray {
    display: flex;
    align-items: center;
    margin-left: auto;
    margin-right: 5px;
    padding-right: 16px;
    border-right: 1px solid #767d8c;
}
.moon {
    width: 22px;
    height: 22px;
}
.temp {
    margin: 0 12px 0 14px;
    font-size: 17px;
}
.sky {
    width: 88px;
    font-family: "DejaVu Sans", sans-serif;
    font-size: 17px;
    white-space: nowrap;
}
.tray .chevron {
    width: 18px;
    margin: 0 12px 0 20px;
}
.tray > svg + svg {
    margin-right: 10px;
}
.lang {
    margin-left: 4px;
    font-size: 14px;
}
.clock {
    width: 92px;
    margin-left: 5px;
    font-size: 14px;
    line-height: 23px;
    text-align: center;
}
.notify {
    width: 40px;
    height: 50px;
}
.notify .count {
    left: 18px;
}
```
FILE: graph.js
```js
// One sample every 14s over the last hour, as heights in the plot's viewBox.
const samples = [
    270, 650, 661, 343, 615, 772, 605, 417, 354, 438, 494, 172, 893, 409, 727, 736, 392, 710, 850, 570,
    404, 870, 937, 421, 714, 368, 391, 692, 739, 436, 421, 550, 671, 358, 480, 703, 236, 785, 935, 755,
    374, 341, 761, 534, 743, 693, 322, 700, 803, 468, 1030, 755, 487, 630, 715, 857, 589, 803, 532, 825,
    670, 401, 675, 750, 649, 882, 322, 691, 615, 931, 492, 670, 793, 817, 952, 564, 605, 833, 479, 649,
    571, 640, 615, 505, 312, 808, 690, 331, 695, 453, 800, 451, 935, 1035, 468, 1052, 622, 850, 899, 667,
    859, 361, 573, 527, 911, 550, 343, 577, 545, 595, 818, 541, 800, 487, 420, 1070, 658, 825, 280, 674,
    643, 467, 532, 712, 587, 920, 901, 532, 899, 710, 525, 720, 836, 401, 570, 616, 335, 981, 667, 1016,
    493, 1128, 702, 859, 564, 735, 795, 688, 1085, 518, 607, 782, 808, 557, 503, 637, 327, 803, 768, 433,
    630, 653, 330, 1050, 436, 547, 778, 722, 442, 633, 615, 427, 611, 182, 620, 885, 436, 645, 583, 827,
    647, 1045, 810, 130, 715, 880, 786, 1108, 900, 823, 746, 1022, 454, 718, 823, 446, 661, 175, 870, 955,
    598, 975, 691, 891, 832, 559, 944, 657, 820, 1130, 655, 896, 437, 802, 746, 1001, 845, 532, 886, 658,
    833, 570, 895, 1091, 760, 468, 808, 832, 670, 391, 944, 587, 863, 661, 899, 610, 738, 568, 824, 574,
    858, 962, 690, 492, 860, 1089, 726, 854, 822, 419, 996, 524, 1034, 650, 529, 817, 601, 887
];

document.getElementById("series").setAttribute("points", samples.map((y, i) => `${i},${y}`).join(" "));
```
